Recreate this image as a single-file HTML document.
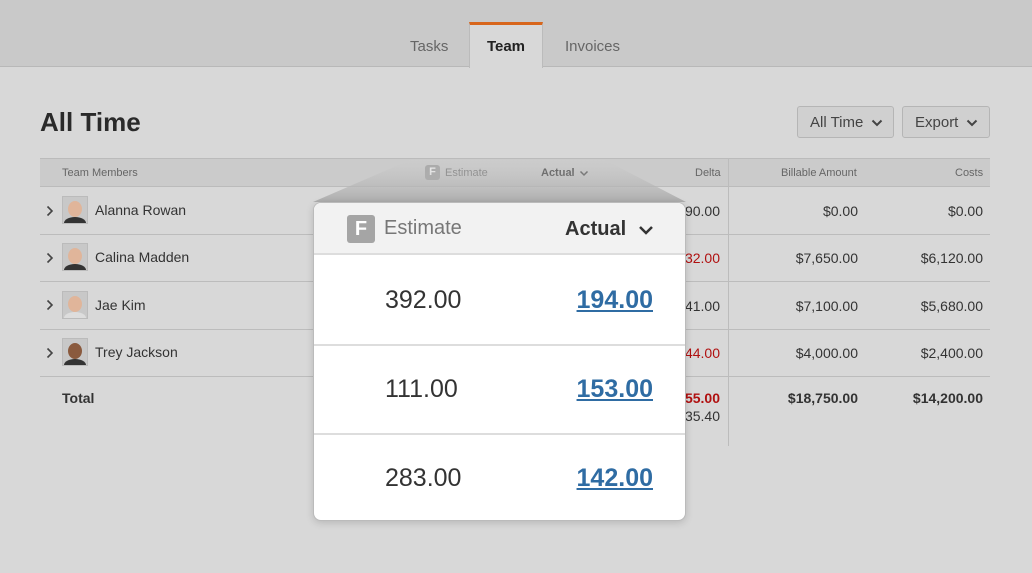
<!DOCTYPE html>
<html><head><style>
*{margin:0;padding:0;box-sizing:border-box}
body{width:1032px;height:573px;background:#d8d8d8;font-family:"Liberation Sans",sans-serif;position:relative;overflow:hidden;color:#333}
.abs{position:absolute}
.top{left:0;top:0;width:1032px;height:67px;background:#c9c9c9;border-bottom:1px solid #b8b8b8}
.tab{top:38px;font-size:15px;color:#666}
.active{left:469px;top:22px;width:74px;height:46px;background:#d8d8d8;border-top:3px solid #d8661c;border-left:1px solid #bbb;border-right:1px solid #bbb;text-align:center;padding-top:13px;font-weight:bold;font-size:15px;color:#222}
h1{position:absolute;left:40px;top:107px;font-size:26px;font-weight:bold;color:#2a2a2a}
.btn{top:106px;height:32px;border:1px solid #b5b5b5;border-radius:3px;background:#d0d0d0;font-size:15px;color:#444;padding:7px 0 0 12px}
.hdr{left:40px;top:158px;width:950px;height:29px;background:#cbcbcb;border-top:1px solid #bbb;border-bottom:1px solid #bbb}
.hs{font-size:11px;color:#666;top:167px}
.line{left:40px;width:950px;height:1px;background:#bcbcbc}
.name{left:95px;font-size:14px;color:#333}
.chev{left:46px}
.av{left:62px;width:26px;height:28px;background:#c8c8c8;border:1px solid #bbb;overflow:hidden}
.av i{position:absolute;left:5px;top:4px;width:14px;height:16px;border-radius:50%;background:#e0b59a}
.av b{position:absolute;left:1px;bottom:-6px;width:22px;height:12px;border-radius:50%;background:#333}
.num{font-size:14px;text-align:right;color:#333}
.red{color:#b01010}
.pop{left:313px;top:202px;width:373px;height:319px;background:#fff;border-radius:8px;border:1px solid #bbb;overflow:hidden;box-shadow:0 2px 8px rgba(0,0,0,.15)}
.ph{left:0;top:0;width:373px;height:52px;background:#f2f2f2;border-bottom:2px solid #ddd}
.big{font-size:25px;color:#333;left:71px}
.lnk{font-size:25px;font-weight:bold;color:#2f6ca3;text-decoration:underline;right:32px}
.fi{display:inline-block;background:#999;color:#fff;font-weight:bold;text-align:center;border-radius:3px}
</style></head><body>
<div class="abs top"></div>
<div class="abs tab" style="left:410px">Tasks</div>
<div class="abs active">Team</div>
<div class="abs tab" style="left:565px">Invoices</div>
<h1>All Time</h1>
<div class="abs btn" style="left:797px;width:97px">All Time <svg width="12" height="8" style="margin-left:3px"><path d="M1.5 1.5L6 6L10.5 1.5" stroke="#444" stroke-width="2" fill="none"/></svg></div>
<div class="abs btn" style="left:902px;width:88px">Export <svg width="12" height="8" style="margin-left:3px"><path d="M1.5 1.5L6 6L10.5 1.5" stroke="#444" stroke-width="2" fill="none"/></svg></div>
<div class="abs hdr"></div>
<div class="abs hs" style="left:62px">Team Members</div>
<div class="abs fi" style="left:425px;top:165px;width:15px;height:15px;font-size:11px;line-height:15px">F</div>
<div class="abs hs" style="left:445px">Estimate</div>
<div class="abs hs" style="left:541px;color:#222;font-weight:bold">Actual</div>
<svg class="abs" style="left:579px;top:170px" width="10" height="7"><path d="M1.5 1.5L5 5L8.5 1.5" stroke="#333" stroke-width="1.5" fill="none"/></svg>
<div class="abs hs" style="left:695px">Delta</div>
<div class="abs hs" style="left:781px">Billable Amount</div>
<div class="abs hs" style="left:955px">Costs</div>
<div class="abs" style="left:728px;top:158px;width:1px;height:288px;background:#bcbcbc"></div>
<div class="abs line" style="top:234px"></div>
<div class="abs line" style="top:281px"></div>
<div class="abs line" style="top:329px"></div>
<div class="abs line" style="top:376px"></div>

<svg class="abs chev" style="top:205px" width="8" height="12"><path d="M1.5 1.5L6 6L1.5 10.5" stroke="#444" stroke-width="1.6" fill="none"/></svg><div class="abs av" style="top:196px"><i></i><b></b></div><div class="abs name" style="top:202px">Alanna Rowan</div>
<svg class="abs chev" style="top:252px" width="8" height="12"><path d="M1.5 1.5L6 6L1.5 10.5" stroke="#444" stroke-width="1.6" fill="none"/></svg><div class="abs av" style="top:243px"><i></i><b></b></div><div class="abs name" style="top:249px">Calina Madden</div>
<svg class="abs chev" style="top:299px" width="8" height="12"><path d="M1.5 1.5L6 6L1.5 10.5" stroke="#444" stroke-width="1.6" fill="none"/></svg><div class="abs av" style="top:291px"><i></i><b style="background:#ddd"></b></div><div class="abs name" style="top:297px">Jae Kim</div>
<svg class="abs chev" style="top:347px" width="8" height="12"><path d="M1.5 1.5L6 6L1.5 10.5" stroke="#444" stroke-width="1.6" fill="none"/></svg><div class="abs av" style="top:338px"><i style="background:#8a5a3e"></i><b></b></div><div class="abs name" style="top:344px">Trey Jackson</div>
<div class="abs name" style="left:62px;top:390px;font-weight:bold">Total</div>

<div class="abs num" style="left:640px;width:80px;top:203px">90.00</div>
<div class="abs num red" style="left:640px;width:80px;top:250px">32.00</div>
<div class="abs num" style="left:640px;width:80px;top:298px">41.00</div>
<div class="abs num red" style="left:640px;width:80px;top:345px">44.00</div>
<div class="abs num red" style="left:640px;width:80px;top:390px;font-weight:bold">55.00</div>
<div class="abs num" style="left:640px;width:80px;top:408px">35.40</div>
<div class="abs num" style="left:740px;width:118px;top:203px">$0.00</div>
<div class="abs num" style="left:740px;width:118px;top:250px">$7,650.00</div>
<div class="abs num" style="left:740px;width:118px;top:298px">$7,100.00</div>
<div class="abs num" style="left:740px;width:118px;top:345px">$4,000.00</div>
<div class="abs num" style="left:740px;width:118px;top:390px;font-weight:bold">$18,750.00</div>
<div class="abs num" style="left:870px;width:113px;top:203px">$0.00</div>
<div class="abs num" style="left:870px;width:113px;top:250px">$6,120.00</div>
<div class="abs num" style="left:870px;width:113px;top:298px">$5,680.00</div>
<div class="abs num" style="left:870px;width:113px;top:345px">$2,400.00</div>
<div class="abs num" style="left:870px;width:113px;top:390px;font-weight:bold">$14,200.00</div>

<svg class="abs" style="left:300px;top:160px" width="400" height="50"><defs><linearGradient id="g" x1="0" y1="0" x2="0" y2="1"><stop offset="0" stop-color="#cdcdcd" stop-opacity=".3"/><stop offset="1" stop-color="#a8a8a8" stop-opacity=".9"/></linearGradient></defs><polygon points="110,0 305,0 386,42 13,42" fill="url(#g)"/></svg>

<div class="abs pop">
<div class="abs ph"></div>
<div class="abs fi" style="left:33px;top:12px;width:28px;height:28px;font-size:20px;line-height:28px;background:#a5a5a5">F</div>
<div class="abs" style="left:70px;top:14px;font-size:20px;color:#777">Estimate</div>
<div class="abs" style="left:251px;top:15px;font-size:20px;font-weight:bold;color:#333">Actual</div>
<svg class="abs" style="left:324px;top:22px" width="16" height="11"><path d="M2 2L8 8L14 2" stroke="#333" stroke-width="2.5" fill="none"/></svg>
<div class="abs big" style="top:83px">392.00</div>
<div class="abs lnk" style="top:83px">194.00</div>
<div class="abs" style="left:0;top:141px;width:373px;height:2px;background:#ddd"></div>
<div class="abs big" style="top:172px">111.00</div>
<div class="abs lnk" style="top:172px">153.00</div>
<div class="abs" style="left:0;top:230px;width:373px;height:2px;background:#ddd"></div>
<div class="abs big" style="top:261px">283.00</div>
<div class="abs lnk" style="top:261px">142.00</div>
</div>
</body></html>
